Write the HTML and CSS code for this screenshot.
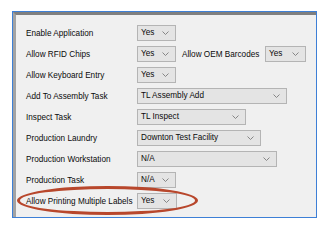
FILE: index.html
```html
<!DOCTYPE html>
<html>
<head>
    <meta http-equiv="Content-Type" content="text/html; charset=utf-8">
    <title>Settings</title>
    <link rel="stylesheet" href="styles.css">
</head>
<body>
    <div class="window">
        <div class="panel">
            <div class="row">
                <div class="label">Enable Application</div>
                <div class="combo w-yes">Yes<svg class="chev" viewBox="0 0 7 4"><polyline points="0.5,0.5 3.5,3.5 6.5,0.5"/></svg></div>
            </div>
            <div class="row">
                <div class="label">Allow RFID Chips</div>
                <div class="combo w-yes">Yes<svg class="chev" viewBox="0 0 7 4"><polyline points="0.5,0.5 3.5,3.5 6.5,0.5"/></svg></div>
                <div class="label-inline">Allow OEM Barcodes</div>
                <div class="combo w-oem">Yes<svg class="chev" viewBox="0 0 7 4"><polyline points="0.5,0.5 3.5,3.5 6.5,0.5"/></svg></div>
            </div>
            <div class="row">
                <div class="label">Allow Keyboard Entry</div>
                <div class="combo w-yes">Yes<svg class="chev" viewBox="0 0 7 4"><polyline points="0.5,0.5 3.5,3.5 6.5,0.5"/></svg></div>
            </div>
            <div class="row">
                <div class="label">Add To Assembly Task</div>
                <div class="combo w-assembly">TL Assembly Add<svg class="chev" viewBox="0 0 7 4"><polyline points="0.5,0.5 3.5,3.5 6.5,0.5"/></svg></div>
            </div>
            <div class="row">
                <div class="label">Inspect Task</div>
                <div class="combo w-inspect">TL Inspect<svg class="chev" viewBox="0 0 7 4"><polyline points="0.5,0.5 3.5,3.5 6.5,0.5"/></svg></div>
            </div>
            <div class="row">
                <div class="label">Production Laundry</div>
                <div class="combo w-laundry">Downton Test Facility<svg class="chev" viewBox="0 0 7 4"><polyline points="0.5,0.5 3.5,3.5 6.5,0.5"/></svg></div>
            </div>
            <div class="row">
                <div class="label">Production Workstation</div>
                <div class="combo w-station">N/A<svg class="chev" viewBox="0 0 7 4"><polyline points="0.5,0.5 3.5,3.5 6.5,0.5"/></svg></div>
            </div>
            <div class="row">
                <div class="label">Production Task</div>
                <div class="combo w-yes">N/A<svg class="chev" viewBox="0 0 7 4"><polyline points="0.5,0.5 3.5,3.5 6.5,0.5"/></svg></div>
            </div>
            <div class="row">
                <div class="label">Allow Printing Multiple Labels</div>
                <div class="combo w-last">Yes<svg class="chev" viewBox="0 0 7 4"><polyline points="0.5,0.5 3.5,3.5 6.5,0.5"/></svg></div>
            </div>
        </div>
    </div>

    <!-- red highlight drawn over the last row -->
    <div class="highlight"></div>
</body>
</html>
```

FILE: styles.css
```css
body, html {
    margin: 0;
    background: #fff;
    font-family: "Liberation Sans", Arial, sans-serif;
    font-size: 8.2px;
    color: #0a0a0a;
}

.window {
    margin: 11px 0 0 12px;
    width: 305px;
    height: 207px;
    box-sizing: border-box;
    border: 1px solid #3d7fd6;
    background: #f0f0f0;
}

.panel {
    height: 100%;
    box-sizing: border-box;
    border-top: 3px solid #7f7f7f;
    border-left: 3px solid #a3a3a3;
    padding: 10px 0 0 10px;
}

.row {
    display: flex;
    align-items: center;
    height: 16px;
    margin-bottom: 5px;
}

.label {
    width: 111px;
    flex: none;
    white-space: nowrap;
}

.label-inline {
    margin-left: 6px;
    width: 83px;
    flex: none;
    white-space: nowrap;
}

.combo {
    position: relative;
    height: 16px;
    line-height: 14px;
    box-sizing: border-box;
    border: 1px solid #b4b4b4;
    background: #e4e4e4;
    padding-left: 3px;
    flex: none;
}

.chev {
    position: absolute;
    right: 6px;
    top: 5px;
    width: 7px;
    height: 4px;
    fill: none;
    stroke: #7a7a7a;
    stroke-width: 0.9;
}

.w-yes { width: 39px; }
.w-oem { width: 41px; }
.w-assembly { width: 150px; }
.w-inspect { width: 109px; }
.w-laundry { width: 124px; }
.w-station { width: 140px; }
.w-last { width: 40px; }

.highlight {
    position: absolute;
    left: 17px;
    top: 186px;
    width: 181px;
    height: 29px;
    box-sizing: border-box;
    border: 3px solid #b8472c;
    border-radius: 50%;
}
```
